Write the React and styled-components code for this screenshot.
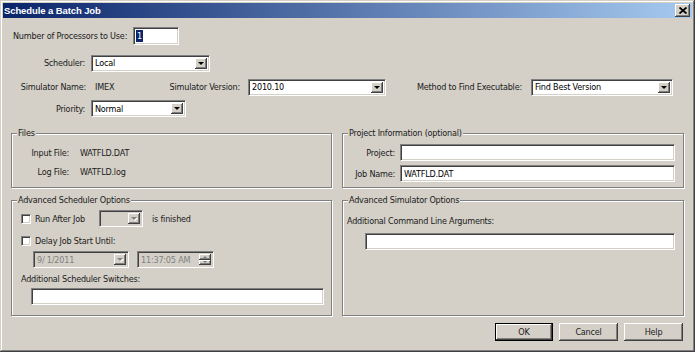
import React from "react";
import styled, { createGlobalStyle } from "styled-components";

const GlobalStyle = createGlobalStyle`
  html, body {
    margin: 0;
    padding: 0;
    background: #d4d0c8;
  }
  body {
    font-family: "DejaVu Sans Condensed", "Liberation Sans Narrow", "Liberation Sans", Arial, sans-serif;
    font-size: 9px;
    letter-spacing: -0.2px;
    color: #1a1a1a;
  }
  * {
    box-sizing: border-box;
  }
`;

const sunken = `
  border: 1px solid;
  border-color: #808080 #ffffff #ffffff #808080;
  box-shadow: inset 1px 1px #404040, inset -1px -1px #d4d0c8;
`;

const raised = `
  background: #d4d0c8;
  box-shadow: inset -1px -1px #404040, inset 1px 1px #ffffff, inset -2px -2px #808080, inset 2px 2px #d4d0c8;
`;

const Window = styled.div`
  width: 695px;
  height: 352px;
  padding: 3px;
  background: #d4d0c8;
  box-shadow: inset -1px -1px #404040, inset 1px 1px #d4d0c8, inset -2px -2px #808080, inset 2px 2px #ffffff;
  display: flex;
  flex-direction: column;
`;

const TitleBar = styled.div`
  height: 15px;
  display: flex;
  align-items: center;
  justify-content: space-between;
  padding: 0 2px 0 1px;
  background: linear-gradient(to right, #0a246a, #a6caf0);
`;

const Title = styled.span`
  color: #fff;
  font-family: "Liberation Sans", Arial, sans-serif;
  font-weight: bold;
  font-size: 9.5px;
  letter-spacing: -0.1px;
`;

const CloseButton = styled.div`
  width: 15px;
  height: 13px;
  display: flex;
  align-items: center;
  justify-content: center;
  ${raised}
`;

const Body = styled.div`
  display: flex;
  flex-direction: column;
  padding: 9px 0 0 8px;
`;

const Row = styled.div`
  display: flex;
  align-items: center;
  height: ${p => p.h || 17}px;
  margin-top: ${p => p.mt || 0}px;
  margin-left: ${p => p.ml || 0}px;
`;

const Label = styled.span`
  flex: none;
  width: ${p => (p.w ? `${p.w}px` : "auto")};
  text-align: ${p => (p.left ? "left" : "right")};
  padding-left: ${p => p.pl || 0}px;
  margin-left: ${p => p.ml || 0}px;
  white-space: nowrap;
  line-height: 12px;
`;

const Field = styled.div`
  flex: none;
  width: ${p => p.w}px;
  height: ${p => p.h || 17}px;
  margin-left: ${p => p.ml || 0}px;
  background: ${p => (p.disabled ? "#d4d0c8" : "#ffffff")};
  color: ${p => (p.disabled ? "#808080" : "#000")};
  display: flex;
  align-items: center;
  padding: 2px;
  ${sunken}
`;

const FieldText = styled.span`
  flex: 1;
  padding-left: 1px;
  white-space: nowrap;
  overflow: hidden;
`;

const Selected = styled.span`
  background: #0a246a;
  color: #fff;
  padding: 0 1px;
  line-height: 12px;
`;

const DropButton = styled.div`
  flex: none;
  width: 12px;
  height: 100%;
  display: flex;
  align-items: center;
  justify-content: center;
  ${raised}
`;

const Arrow = styled.span`
  width: 0;
  height: 0;
  border-left: 3px solid transparent;
  border-right: 3px solid transparent;
  border-top: 3px solid ${p => (p.disabled ? "#808080" : "#000")};
  ${p => (p.disabled ? "filter: drop-shadow(1px 1px 0 #fff);" : "")}
`;

const SpinBox = styled.div`
  flex: none;
  width: 12px;
  height: 100%;
  display: flex;
  flex-direction: column;
`;

const SpinHalf = styled.div`
  flex: 1;
  display: flex;
  align-items: center;
  justify-content: center;
  ${raised}
`;

const SpinArrow = styled.span`
  width: 0;
  height: 0;
  border-left: 2px solid transparent;
  border-right: 2px solid transparent;
  ${p => (p.up ? "border-bottom" : "border-top")}: 2px solid #808080;
`;

const Groups = styled.div`
  display: grid;
  grid-template-columns: 321px 342px;
  grid-template-rows: 55px 116px;
  column-gap: 10px;
  row-gap: 12px;
  margin-top: 16px;
`;

const GroupBox = styled.div`
  display: flex;
  flex-direction: column;
  border: 1px solid #808080;
  box-shadow: inset 1px 1px #ffffff, 1px 1px #ffffff;
`;

const GroupTitle = styled.span`
  align-self: flex-start;
  margin: -7px 0 0 5px;
  padding: 0 1px;
  line-height: 12px;
  background: #d4d0c8;
  white-space: nowrap;
`;

const Value = styled.span`
  flex: none;
  width: ${p => (p.w ? `${p.w}px` : "auto")};
  margin-left: ${p => p.ml || 0}px;
  white-space: nowrap;
`;

const CheckBox = styled.span`
  flex: none;
  width: 10px;
  height: 10px;
  margin-left: ${p => p.ml || 0}px;
  background: #fff;
  ${sunken}
`;

const ButtonRow = styled.div`
  width: 673px;
  display: flex;
  justify-content: flex-end;
  gap: 6px;
  padding-right: 1px;
  margin-top: 7px;
`;

const Button = styled.div`
  width: ${p => p.w || 59}px;
  height: 18px;
  display: flex;
  align-items: center;
  justify-content: center;
  ${raised}
  ${p =>
    p.primary
      ? `border: 1px solid #000;
         box-shadow: inset -1px -1px #404040, inset 1px 1px #ffffff, inset -2px -2px #808080;`
      : ""}
`;

const Select = ({ w, ml, value, disabled }) => (
  <Field w={w} ml={ml} disabled={disabled}>
    <FieldText>{value}</FieldText>
    <DropButton>
      <Arrow disabled={disabled} />
    </DropButton>
  </Field>
);

const CloseIcon = () => (
  <svg width="8" height="7" viewBox="0 0 8 7">
    <path d="M0.5 0.5 L7.5 6.5 M7.5 0.5 L0.5 6.5" stroke="#000" strokeWidth="1.8" />
  </svg>
);

export default function App() {
  return (
    <>
      <GlobalStyle />
      <Window>
        <TitleBar>
          <Title>Schedule a Batch Job</Title>
          <CloseButton>
            <CloseIcon />
          </CloseButton>
        </TitleBar>
        <Body>
          <Row h={18}>
            <Label w={122} pl={2} left>
              Number of Processors to Use:
            </Label>
            <Field w={46} h={18}>
              <Selected>1</Selected>
            </Field>
          </Row>
          <Row h={18} mt={9}>
            <Label w={74}>Scheduler:</Label>
            <Select w={119} ml={6} value="Local" />
          </Row>
          <Row h={18} mt={6}>
            <Label w={75}>Simulator Name:</Label>
            <Value w={70} ml={9}>
              IMEX
            </Value>
            <Label w={75}>Simulator Version:</Label>
            <Select w={138} ml={8} value="2010.10" />
            <Label w={136}>Method to Find Executable:</Label>
            <Select w={142} ml={9} value="Find Best Version" />
          </Row>
          <Row h={17} mt={4}>
            <Label w={74}>Priority:</Label>
            <Select w={95} ml={6} value="Normal" />
          </Row>

          <Groups>
            <GroupBox>
              <GroupTitle>Files</GroupTitle>
              <Row h={12} mt={8}>
                <Label w={57}>Input File:</Label>
                <Value ml={11}>WATFLD.DAT</Value>
              </Row>
              <Row h={12} mt={7}>
                <Label w={57}>Log File:</Label>
                <Value ml={11}>WATFLD.log</Value>
              </Row>
            </GroupBox>

            <GroupBox>
              <GroupTitle>Project Information (optional)</GroupTitle>
              <Row mt={5}>
                <Label w={52}>Project:</Label>
                <Field w={275} ml={5} />
              </Row>
              <Row mt={4}>
                <Label w={52}>Job Name:</Label>
                <Field w={275} ml={5}>
                  <FieldText>WATFLD.DAT</FieldText>
                </Field>
              </Row>
            </GroupBox>

            <GroupBox>
              <GroupTitle>Advanced Scheduler Options</GroupTitle>
              <Row mt={4}>
                <CheckBox ml={9} />
                <Label w={64} ml={4} left>
                  Run After Job
                </Label>
                <Select w={44} value="" disabled />
                <Value ml={9}>is finished</Value>
              </Row>
              <Row mt={5}>
                <CheckBox ml={9} />
                <Label ml={4} left>
                  Delay Job Start Until:
                </Label>
              </Row>
              <Row mt={2}>
                <Select w={96} ml={21} value="9/ 1/2011" disabled />
                <Field w={77} ml={8} disabled>
                  <FieldText>11:37:05 AM</FieldText>
                  <SpinBox>
                    <SpinHalf>
                      <SpinArrow up />
                    </SpinHalf>
                    <SpinHalf>
                      <SpinArrow />
                    </SpinHalf>
                  </SpinBox>
                </Field>
              </Row>
              <Row h={12} mt={5}>
                <Label ml={9} left>
                  Additional Scheduler Switches:
                </Label>
              </Row>
              <Row mt={3}>
                <Field w={293} ml={19} />
              </Row>
            </GroupBox>

            <GroupBox>
              <GroupTitle>Advanced Simulator Options</GroupTitle>
              <Row h={12} mt={9}>
                <Label ml={4} left>
                  Additional Command Line Arguments:
                </Label>
              </Row>
              <Row mt={6}>
                <Field w={310} ml={22} />
              </Row>
            </GroupBox>
          </Groups>

          <ButtonRow>
            <Button w={58} primary>
              OK
            </Button>
            <Button>Cancel</Button>
            <Button>Help</Button>
          </ButtonRow>
        </Body>
      </Window>
    </>
  );
}
